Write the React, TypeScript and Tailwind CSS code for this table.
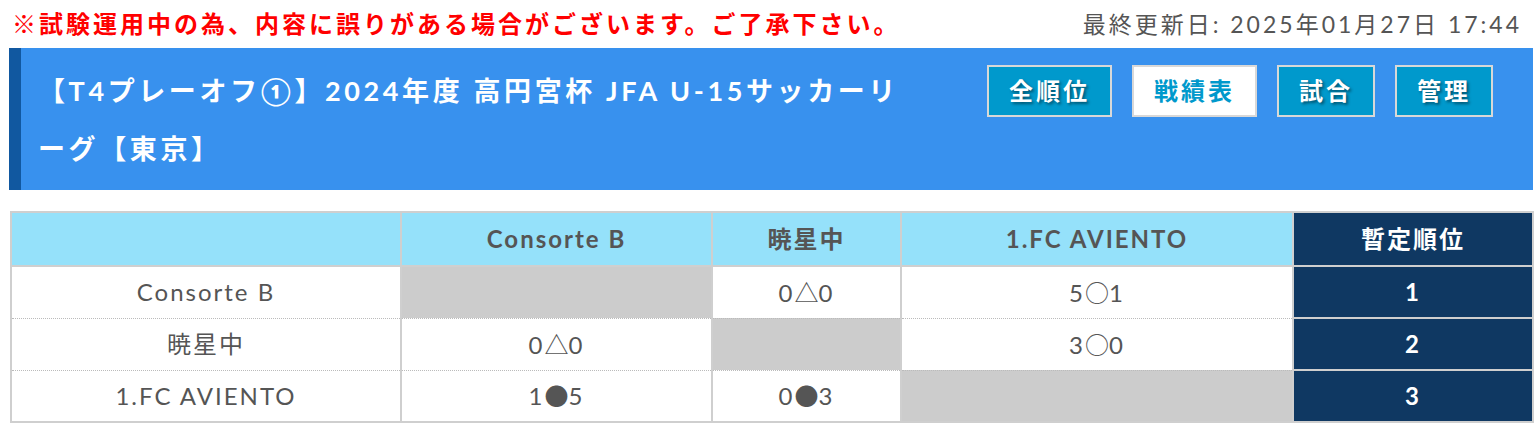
import React from 'react';

const font = "font-['Lato','Noto_Sans_CJK_JP',sans-serif]";

type Cell = { text?: [string, string, string]; blank?: boolean };

function Score({ s }: { s: [string, string, string] }) {
  return (
    <>
      {s[0]}
      <span className="font-['Noto_Sans_CJK_JP',sans-serif] tracking-normal">{s[1]}</span>
      {s[2]}
    </>
  );
}

export default function App() {
  const teams = ['Consorte B', '暁星中', '1.FC AVIENTO'];
  const rows: { name: string; cells: Cell[]; rank: number }[] = [
    { name: 'Consorte B', cells: [{ blank: true }, { text: ['0', '△', '0'] }, { text: ['5', '○', '1'] }], rank: 1 },
    { name: '暁星中', cells: [{ text: ['0', '△', '0'] }, { blank: true }, { text: ['3', '○', '0'] }], rank: 2 },
    { name: '1.FC AVIENTO', cells: [{ text: ['1', '●', '5'] }, { text: ['0', '●', '3'] }, { blank: true }], rank: 3 },
  ];
  const buttons = [
    { label: '全順位', active: false },
    { label: '戦績表', active: true },
    { label: '試合', active: false },
    { label: '管理', active: false },
  ];

  return (
    <div className={`${font} bg-white w-[1536px] h-[427px] overflow-hidden`}>
      {/* notice + updated */}
      <div className="flex items-center justify-between h-[48px] pl-[12px] pr-[14px]">
        <p className="text-[24px] font-bold text-[#ff0000] tracking-[3px] leading-none">
          ※試験運用中の為、内容に誤りがある場合がございます。ご了承下さい。
        </p>
        <p className="text-[23px] text-[#555] tracking-[3px] leading-none">最終更新日: 2025年01月27日 17:44</p>
      </div>

      {/* title bar */}
      <div className="ml-[9px] mr-[3px] h-[142px] flex bg-[#3891ee] border-l-[12px] border-[#1158a0]">
        <h1 className="w-[890px] pl-[17px] pt-[14px] text-[27px] font-bold text-white tracking-[3.6px] leading-[58px] [line-break:loose]">
          【T4プレーオフ①】2024年度 高円宮杯 JFA U-15サッカーリーグ【東京】
        </h1>
        <div className="ml-auto mr-[40px] mt-[17px] flex gap-[20px] h-[52px]">
          {buttons.map((b) => (
            <div
              key={b.label}
              className={`h-[52px] px-[20px] flex items-center justify-center border-2 border-[#d8d8d8] text-[24px] font-bold tracking-[3px] ${
                b.active
                  ? 'bg-white text-[#0099cc]'
                  : 'bg-[#0099cc] text-white [text-shadow:2px_2px_3px_rgba(0,0,0,0.45)]'
              }`}
            >
              {b.label}
            </div>
          ))}
        </div>
      </div>

      {/* standings matrix */}
      <table className="ml-[10px] mt-[21px] w-[1522px] table-fixed border-collapse border-2 border-[#cfcfcf] text-[24px] tracking-[2px]">
        <colgroup>
          <col className="w-[390px]" />
          <col className="w-[311px]" />
          <col className="w-[189px]" />
          <col className="w-[392px]" />
          <col className="w-[240px]" />
        </colgroup>
        <thead>
          <tr className="h-[54px]">
            <th className="bg-[#95e1fa] border-2 border-[#cfcfcf]"></th>
            {teams.map((t) => (
              <th key={t} className="bg-[#95e1fa] border-2 border-[#cfcfcf] font-bold text-[#555]">
                {t}
              </th>
            ))}
            <th className="bg-[#0f3862] border-2 border-[#cfcfcf] font-bold text-white">暫定順位</th>
          </tr>
        </thead>
        <tbody>
          {rows.map((r) => (
            <tr key={r.name} className="h-[52px]">
              <td
                className="text-center text-[#555] border-x-2 border-solid border-[#cfcfcf]"
                style={{ borderBottom: '1px dotted #bbb' }}
              >
                {r.name}
              </td>
              {r.cells.map((c, i) => (
                <td
                  key={i}
                  className={`text-center text-[#555] border-x-2 border-solid border-[#cfcfcf] ${
                    c.blank ? 'bg-[#cccccc]' : 'bg-white'
                  }`}
                  style={{ borderBottom: '1px dotted #bbb' }}
                >
                  {c.text && <Score s={c.text} />}
                </td>
              ))}
              <td className="bg-[#0f3862] text-center text-white font-bold border-2 border-[#cfcfcf]">{r.rank}</td>
            </tr>
          ))}
        </tbody>
      </table>
    </div>
  );
}
